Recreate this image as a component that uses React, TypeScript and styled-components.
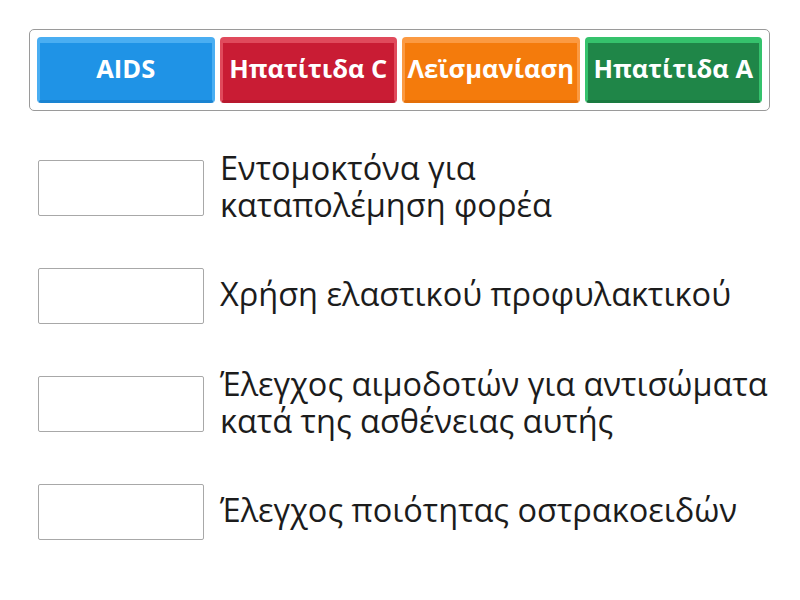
import React from "react";
import styled, { createGlobalStyle } from "styled-components";

const Global = createGlobalStyle`
  html, body { margin: 0; padding: 0; background: #ffffff; }
  body { font-family: "Open Sans", "Noto Sans", sans-serif; }
`;

const Page = styled.div`
  width: 800px;
  height: 600px;
  box-sizing: border-box;
  padding: 29px 30px 0 29px;
`;

const Bank = styled.div`
  box-sizing: border-box;
  width: 741px;
  height: 82px;
  border: 1px solid #9a9a9a;
  border-radius: 5px;
  padding: 7px 7px 8px 7px;
  display: flex;
  gap: 5px;
`;

type Tone = { base: string; light: string; dark: string };

const tones: Record<string, Tone> = {
  blue: { base: "#1f93e6", light: "#4aaef2", dark: "#1a84d2" },
  red: { base: "#c91c34", light: "#e04a5c", dark: "#b8182e" },
  orange: { base: "#f47b0c", light: "#fb9a42", dark: "#e46f08" },
  green: { base: "#1f8648", light: "#35c26c", dark: "#1a7a40" },
};

const Tile = styled.div<{ $tone: Tone }>`
  box-sizing: border-box;
  width: 178px;
  height: 66px;
  border-radius: 4px;
  background: ${(p) => p.$tone.base};
  border: 3px solid ${(p) => p.$tone.light};
  border-top-width: 6px;
  border-bottom: 3px solid ${(p) => p.$tone.dark};
  color: #ffffff;
  font-weight: 700;
  font-size: 25.5px;
  display: flex;
  align-items: center;
  justify-content: center;
  white-space: nowrap;
  padding-bottom: 8px;
`;

const List = styled.div`
  margin-top: 49px;
  margin-left: 9px;
  display: grid;
  grid-template-columns: 166px 1fr;
  grid-auto-rows: 56px;
  row-gap: 52px;
  column-gap: 16px;
  align-items: center;
`;

const Slot = styled.div`
  box-sizing: border-box;
  width: 166px;
  height: 56px;
  border: 1px solid #a8a8a8;
  border-radius: 2px;
  background: #ffffff;
`;

const Clue = styled.div`
  font-size: 32.5px;
  line-height: 37px;
  color: #1c1c1c;
  white-space: nowrap;
  padding-bottom: 5px;
`;

const tiles: { label: string; tone: Tone }[] = [
  { label: "AIDS", tone: tones.blue },
  { label: "Ηπατίτιδα C", tone: tones.red },
  { label: "Λεϊσμανίαση", tone: tones.orange },
  { label: "Ηπατίτιδα Α", tone: tones.green },
];

const clues: string[][] = [
  ["Εντομοκτόνα για", "καταπολέμηση φορέα"],
  ["Χρήση ελαστικού προφυλακτικού"],
  ["Έλεγχος αιμοδοτών για αντισώματα", "κατά της ασθένειας αυτής"],
  ["Έλεγχος ποιότητας οστρακοειδών"],
];

export default function App() {
  return (
    <>
      <Global />
      <Page>
        <Bank>
          {tiles.map((t) => (
            <Tile key={t.label} $tone={t.tone}>
              {t.label}
            </Tile>
          ))}
        </Bank>
        <List>
          {clues.map((lines, i) => (
            <React.Fragment key={i}>
              <Slot />
              <Clue>
                {lines.map((l, j) => (
                  <div key={j}>{l}</div>
                ))}
              </Clue>
            </React.Fragment>
          ))}
        </List>
      </Page>
    </>
  );
}
